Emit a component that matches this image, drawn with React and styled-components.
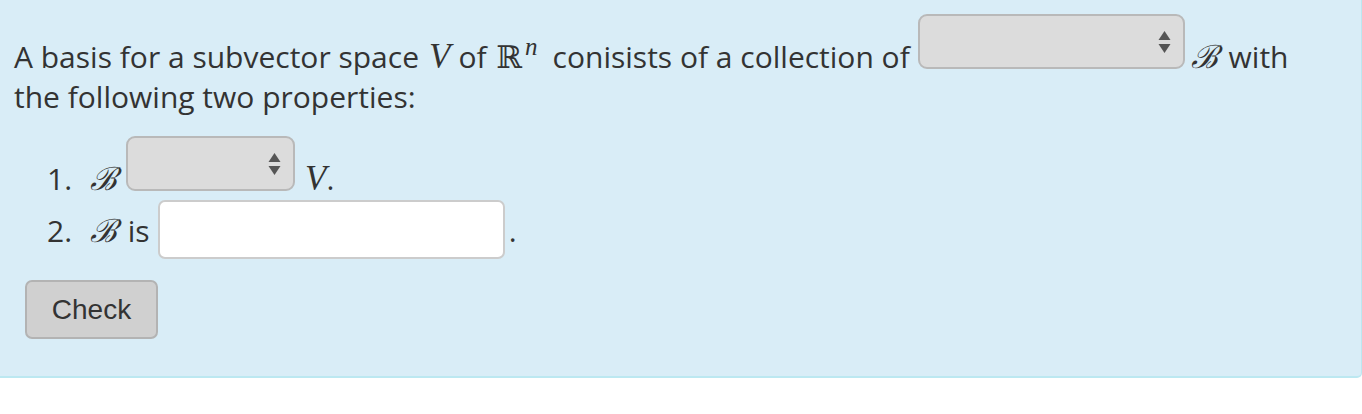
import React from "react";
import styled, { createGlobalStyle } from "styled-components";

const Global = createGlobalStyle`
  html, body {
    margin: 0;
    padding: 0;
    background: #fff;
  }
`;

const Panel = styled.div`
  box-sizing: border-box;
  width: 1362px;
  height: 378px;
  background: #d9edf7;
  border-right: 1px solid #bce8f1;
  border-bottom: 2px solid #bce8f1;
  border-bottom-right-radius: 5px;
  padding: 14px 0 0 14px;
  color: #333;
  font-family: "Open Sans", sans-serif;
  font-size: 30px;
  line-height: 40px;
`;

const Para = styled.p`
  margin: 0;
  width: 1300px;
`;

const MathI = styled.span`
  font-family: "Liberation Serif", serif;
  font-style: italic;
  font-size: 35px;
  line-height: 0;
  margin: 0 ${(p) => p.mr ?? 4}px 0 ${(p) => p.ml ?? 4}px;
`;

const Cal = styled.span`
  font-family: "DejaVu Serif", serif;
  font-style: italic;
  font-size: 32px;
  line-height: 0;
  margin-right: 3px;
`;

const Bb = styled.span`
  font-family: "DejaVu Serif", serif;
  font-size: 31px;
  line-height: 0;
  margin-left: 2px;
`;

const Sup = styled.sup`
  font-family: "Liberation Serif", serif;
  font-style: italic;
  font-size: 25px;
  line-height: 0;
  vertical-align: 13px;
  margin: 0 15px 0 3px;
`;

const SelectBox = styled.span`
  display: inline-block;
  box-sizing: border-box;
  position: relative;
  width: ${(p) => p.w}px;
  height: 55px;
  margin: 0 ${(p) => p.mr}px -1px ${(p) => p.ml}px;
  background: #dcdcdc;
  border: 2px solid #b9b9b9;
  border-radius: 9px;
  vertical-align: baseline;
`;

const Arrows = styled.svg`
  position: absolute;
  right: 12px;
  top: 14px;
`;

const List = styled.div`
  margin-top: 19px;
  padding-left: 33px;
`;

const Row = styled.div`
  margin-top: ${(p) => p.mt || 0}px;
`;

const Num = styled.span`
  display: inline-block;
  width: 43px;
`;

const InputWrap = styled.span`
  display: inline-block;
  overflow: hidden;
  margin: 0 4px 0 8px;
  vertical-align: -17px;
`;

const TextInput = styled.input`
  display: block;
  box-sizing: border-box;
  width: 347px;
  height: 59px;
  padding: 6px 12px;
  border: 2px solid #ccc;
  border-radius: 7px;
  background: #fff;
  font-family: "Open Sans", sans-serif;
  font-size: 28px;
  outline: none;
`;

const CheckButton = styled.button`
  display: block;
  box-sizing: border-box;
  width: 133px;
  height: 59px;
  margin: 21px 0 0 11px;
  background: #d0d0d0;
  border: 2px solid #b3b3b3;
  border-radius: 7px;
  color: #333;
  font-family: "Liberation Sans", Arial, sans-serif;
  font-size: 28px;
  padding: 0;
`;

const Select = ({ w, ml, mr }) => (
  <SelectBox w={w} ml={ml} mr={mr}>
    <Arrows width="13" height="24" viewBox="0 0 13 24">
      <path d="M6.5 1 L12.5 10 L0.5 10 Z" fill="#555" />
      <path d="M0.5 14 L12.5 14 L6.5 23 Z" fill="#555" />
    </Arrows>
  </SelectBox>
);

export default function App() {
  return (
    <>
      <Global />
      <Panel>
        <Para>
          A basis for a subvector space<MathI ml={10} mr={8}>V</MathI>of <Bb>ℝ</Bb>
          <Sup>n</Sup>conisists of a collection of
          <Select w={267} ml={8} mr={6} />
          <Cal>ℬ</Cal> with the following two properties:
        </Para>
        <List>
          <Row>
            <Num>1.</Num>
            <Cal>ℬ</Cal>
            <Select w={169} ml={6} mr={10} />
            <MathI ml={0} mr={0}>V</MathI>.
          </Row>
          <Row mt={1}>
            <Num>2.</Num>
            <Cal>ℬ</Cal> is
            <InputWrap>
              <TextInput type="text" />
            </InputWrap>
            .
          </Row>
        </List>
        <CheckButton>Check</CheckButton>
      </Panel>
    </>
  );
}
